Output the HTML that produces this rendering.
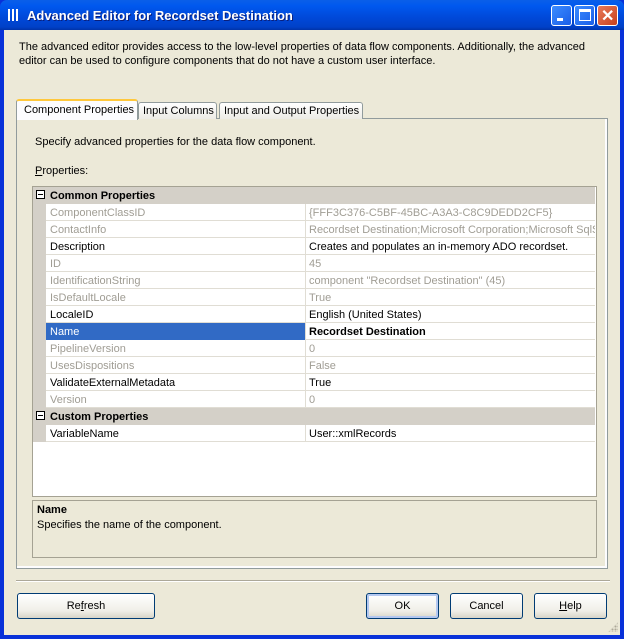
<!DOCTYPE html>
<html><head><style>
*{margin:0;padding:0;box-sizing:border-box}
body{width:624px;height:639px;overflow:hidden;font-family:"Liberation Sans",sans-serif;font-size:11px;background:#0831d9;position:relative}
.abs{position:absolute;white-space:nowrap}
.title{left:0;top:0;width:624px;height:30px;background:linear-gradient(#0a5fe8,#0058ee 20%,#0048d8 60%,#0041c8 90%,#0033a8);border-radius:7px 7px 0 0}
.title .t{left:27px;top:8px;color:#fff;font-weight:bold;font-size:13px;text-shadow:1px 1px #0a1f7a}
.body{left:4px;top:30px;width:616px;height:605px;background:#ece9d8}
.tb{top:5px;width:21px;height:21px;border:1px solid #fff;border-radius:3px;background:linear-gradient(135deg,#3c8cff,#1a5ee8)}
.grid-row{position:absolute;left:46px;width:549px;height:17px;border-bottom:1px solid #e0ddd4;background:#fff}
.grid-row span{position:absolute;top:3px;white-space:nowrap;overflow:hidden}
.k{left:4px;width:252px}
.v{left:259px;width:290px;border-left:1px solid #e0ddd4;padding-left:3px;top:0!important;height:17px;line-height:18px}
.dim{color:#a09d94}
.btn{position:absolute;top:593px;height:26px;border:1px solid #003c74;border-radius:3px;background:linear-gradient(#fff,#f0efe8 70%,#d8d5c8);text-align:center;line-height:24px}
</style></head><body>
<div class="abs title">
 <div class="abs" style="left:8px;top:9px;width:12px;height:12px;background:repeating-linear-gradient(90deg,#fff 0 2px,transparent 2px 4px)"></div>
 <div class="abs t">Advanced Editor for Recordset Destination</div>
 <div class="abs tb" style="left:551px"><div class="abs" style="left:5px;top:12px;width:6px;height:3px;background:#fff"></div></div>
 <div class="abs tb" style="left:574px"><div class="abs" style="left:4px;top:3px;width:12px;height:12px;border:1px solid #fff;border-top-width:3px"></div></div>
 <div class="abs tb" style="left:597px;background:linear-gradient(135deg,#e87a5a,#c8401c)"><div class="abs" style="left:3px;top:0px;color:#fff;font-size:16px;font-weight:bold">✕</div></div>
</div>
<div class="abs body"></div>
<div class="abs" style="left:19px;top:40px;width:590px;line-height:14px;white-space:normal">The advanced editor provides access to the low-level properties of data flow components. Additionally, the advanced editor can be used to configure components that do not have a custom user interface.</div>
<div class="abs" style="left:16px;top:118px;width:592px;height:451px;border:1px solid #919b9c;background:#fcfcfe"></div>
<div class="abs" style="left:17px;top:119px;width:588px;height:447px;background:#ece9d8"></div>
<div class="abs" style="left:16px;top:99px;width:122px;height:21px;border:1px solid #919b9c;border-bottom:none;border-top:2px solid #ffc83c;border-radius:3px 3px 0 0;background:#fcfcfe;padding:3px 0 0 7px">Component Properties</div>
<div class="abs" style="left:138px;top:102px;width:79px;height:17px;border:1px solid #919b9c;border-bottom:none;border-radius:3px 3px 0 0;background:linear-gradient(#fff,#ecebe5);padding:2px 0 0 4px">Input Columns</div>
<div class="abs" style="left:219px;top:102px;width:144px;height:17px;border:1px solid #919b9c;border-bottom:none;border-radius:3px 3px 0 0;background:linear-gradient(#fff,#ecebe5);padding:2px 0 0 4px">Input and Output Properties</div>
<div class="abs" style="left:35px;top:136px">Specify advanced properties for the data flow component.</div>
<div class="abs" style="left:35px;top:165px"><u>P</u>roperties:</div>
<div class="abs" style="left:32px;top:186px;width:565px;height:311px;border:1px solid #a5a293;background:#fff"></div>
<div class="abs" style="left:33px;top:187px;width:13px;height:255px;background:#d4d0c8"></div>
<div class="abs" style="left:33px;top:187px;width:562px;height:17px;background:#d4d0c8"></div>
<div class="abs" style="left:36px;top:190px;width:9px;height:9px;border:1px solid #000;background:#fff"><div class="abs" style="left:1px;top:3px;width:5px;height:1px;background:#000"></div></div>
<div class="abs" style="left:50px;top:190px;font-weight:bold">Common Properties</div>
<div class="abs" style="left:33px;top:408px;width:562px;height:17px;background:#d4d0c8"></div>
<div class="abs" style="left:36px;top:411px;width:9px;height:9px;border:1px solid #000;background:#fff"><div class="abs" style="left:1px;top:3px;width:5px;height:1px;background:#000"></div></div>
<div class="abs" style="left:50px;top:411px;font-weight:bold">Custom Properties</div>

<div class="grid-row" style="top:204px"><span class="k dim">ComponentClassID</span><span class="v dim">{FFF3C376-C5BF-45BC-A3A3-C8C9DEDD2CF5}</span></div>
<div class="grid-row" style="top:221px"><span class="k dim">ContactInfo</span><span class="v dim">Recordset Destination;Microsoft Corporation;Microsoft SqlServer</span></div>
<div class="grid-row" style="top:238px"><span class="k">Description</span><span class="v">Creates and populates an in-memory ADO recordset.</span></div>
<div class="grid-row" style="top:255px"><span class="k dim">ID</span><span class="v dim">45</span></div>
<div class="grid-row" style="top:272px"><span class="k dim">IdentificationString</span><span class="v dim">component "Recordset Destination" (45)</span></div>
<div class="grid-row" style="top:289px"><span class="k dim">IsDefaultLocale</span><span class="v dim">True</span></div>
<div class="grid-row" style="top:306px"><span class="k">LocaleID</span><span class="v">English (United States)</span></div>
<div class="grid-row" style="top:323px"><div class="abs" style="left:0;top:0;width:259px;height:17px;background:#316ac5"></div><span class="k" style="color:#fff">Name</span><span class="v" style="font-weight:bold">Recordset Destination</span></div>
<div class="grid-row" style="top:340px"><span class="k dim">PipelineVersion</span><span class="v dim">0</span></div>
<div class="grid-row" style="top:357px"><span class="k dim">UsesDispositions</span><span class="v dim">False</span></div>
<div class="grid-row" style="top:374px"><span class="k">ValidateExternalMetadata</span><span class="v">True</span></div>
<div class="grid-row" style="top:391px"><span class="k dim">Version</span><span class="v dim">0</span></div>
<div class="grid-row" style="top:425px"><span class="k">VariableName</span><span class="v">User::xmlRecords</span></div>
<div class="abs" style="left:32px;top:500px;width:565px;height:58px;border:1px solid #a5a293"></div>
<div class="abs" style="left:37px;top:504px;font-weight:bold">Name</div>
<div class="abs" style="left:37px;top:519px">Specifies the name of the component.</div>
<div class="abs" style="left:16px;top:580px;width:594px;height:2px;border-top:1px solid #aca899;border-bottom:1px solid #fff"></div>
<div class="btn" style="left:17px;width:138px">Re<u>f</u>resh</div>
<div class="btn" style="left:366px;width:73px;box-shadow:inset 0 0 0 2px #b4c8f0">OK</div>
<div class="btn" style="left:450px;width:73px">Cancel</div>
<div class="btn" style="left:534px;width:73px"><u>H</u>elp</div>
<div class="abs" style="left:608px;top:622px;width:10px;height:10px;background:radial-gradient(circle,#aca899 1px,transparent 1.2px) 0 0/3px 3px;clip-path:polygon(100% 0,100% 100%,0 100%)"></div>
</body></html>
